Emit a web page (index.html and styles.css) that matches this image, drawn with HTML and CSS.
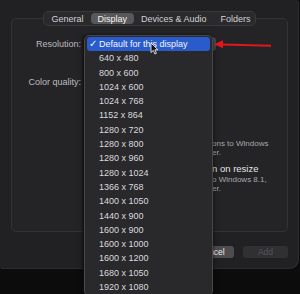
FILE: index.html
```html
<!DOCTYPE html>
<html lang="en">
<head>
  <meta charset="UTF-8" />
  <title>Edit PC - Display</title>
  <meta name="viewport" content="width=device-width, initial-scale=1.0" />
  <link rel="stylesheet" href="styles.css">
</head>
<body>
  <div class="window">
    <div class="tabs">
      <span class="tab">General</span>
      <span class="tab active">Display</span>
      <span class="tab">Devices &amp; Audio</span>
      <span class="tab">Folders</span>
    </div>

    <div class="group">
      <div class="row">
        <label class="label">Resolution:</label>
        <div class="popup"></div>
      </div>
      <div class="row row-gap">
        <label class="label">Color quality:</label>
        <div class="popup short"></div>
      </div>

      <div class="notes">
        <p class="note">ons to Windows</p>
        <p class="note">er.</p>
        <p class="option">n on resize</p>
        <p class="note">o Windows 8.1,</p>
        <p class="note">er.</p>
      </div>
    </div>

    <div class="buttons">
      <button class="btn">Cancel</button>
      <button class="btn disabled">Add</button>
    </div>

    <!-- open resolution menu -->
    <ul class="menu">
      <li class="item selected"><span class="check">✓</span>Default for this display</li>
      <li class="item">640 x 480</li>
      <li class="item">800 x 600</li>
      <li class="item">1024 x 600</li>
      <li class="item">1024 x 768</li>
      <li class="item">1152 x 864</li>
      <li class="item">1280 x 720</li>
      <li class="item">1280 x 800</li>
      <li class="item">1280 x 960</li>
      <li class="item">1280 x 1024</li>
      <li class="item">1366 x 768</li>
      <li class="item">1400 x 1050</li>
      <li class="item">1440 x 900</li>
      <li class="item">1600 x 900</li>
      <li class="item">1600 x 1000</li>
      <li class="item">1600 x 1200</li>
      <li class="item">1680 x 1050</li>
      <li class="item">1920 x 1080</li>
    </ul>

    <svg class="cursor" width="9" height="13" viewBox="0 0 9 13">
      <path d="M1 1 L1 10.5 L3.3 8.4 L4.9 12 L6.4 11.3 L4.9 7.8 L8 7.8 Z" fill="#111" stroke="#eee" stroke-width="0.9" stroke-linejoin="round" />
    </svg>

    <svg class="arrow" width="60" height="10" viewBox="0 0 60 10">
      <polygon points="0,4.3 9,0.3 9,8.3" fill="#e3161c" />
      <line x1="8" y1="4.4" x2="57" y2="5.8" stroke="#e3161c" stroke-width="2" />
    </svg>
  </div>
</body>
</html>
```

FILE: styles.css
```css
* {
  box-sizing: border-box;
  margin: 0;
  padding: 0;
}

body {
  background-color: #0c0c0d;
  font-family: 'Liberation Sans', Arial, sans-serif;
  font-size: 9px;
  color: #c4c3c6;
  width: 300px;
  height: 294px;
  overflow: hidden;
}

.window {
  position: relative;
  width: 298px;
  height: 268px;
  padding-top: 11px;
  background-color: #212023;
  border-radius: 0 0 9px 0;
  box-shadow: 1px 1px 0 #2c2b2e;
}

.tabs {
  position: relative;
  z-index: 1;
  display: flex;
  width: 213px;
  height: 15px;
  margin: 0 auto;
  padding: 1px;
  background-color: #2a292c;
  border: 1px solid #39383b;
  border-radius: 5px;
}

.tab {
  flex: 1 1 auto;
  display: flex;
  align-items: center;
  justify-content: center;
  padding: 0 7px;
  border-radius: 4px;
  color: #d2d1d4;
  white-space: nowrap;
}

.tab.active {
  background-color: #58575a;
  color: #f2f2f2;
}

.group {
  width: 277px;
  height: 214px;
  margin: -8px 0 0 11px;
  padding-top: 17px;
  background-color: #242326;
  border: 1px solid #333235;
  border-radius: 5px;
}

.row {
  display: flex;
  align-items: center;
  height: 16px;
}

.row-gap {
  margin-top: 22px;
}

.label {
  width: 70px;
  padding-right: 1px;
  text-align: right;
  color: #bdbcbf;
}

.popup {
  width: 132px;
  height: 14px;
  margin-left: 2px;
  background-color: #4a494c;
  border-radius: 4px;
}

.popup.short {
  width: 100px;
}

.notes {
  margin: 49px 0 0 200px;
  white-space: nowrap;
}

.note {
  font-size: 8px;
  line-height: 9px;
  color: #a9a8ab;
}

.option {
  margin: 6px 0 1px;
  font-size: 9.5px;
  line-height: 11px;
  color: #e6e5e8;
}

.buttons {
  display: flex;
  justify-content: flex-end;
  gap: 9px;
  margin-top: 14px;
  padding-right: 10px;
}

.btn {
  width: 45px;
  height: 12px;
  border: none;
  border-radius: 3px;
  background-color: #4d4c4f;
  color: #ececec;
  font-family: inherit;
  font-size: 8.5px;
}

.btn.disabled {
  background-color: #302f32;
  color: #58575a;
}

.menu {
  position: absolute;
  left: 84px;
  top: 35px;
  width: 129px;
  padding: 1px;
  list-style: none;
  background-color: #29282b;
  border: 1px solid #48474a;
  border-radius: 5px;
  box-shadow: -1px 0 2px #0e0e10, 0 2px 6px rgba(0, 0, 0, 0.5);
}

.item {
  position: relative;
  height: 14.3px;
  line-height: 14.3px;
  margin: 0 1px;
  padding-left: 12px;
  color: #dcdbde;
  border-radius: 3px;
  white-space: nowrap;
}

.item.selected {
  background-color: #2a5bcb;
  color: #f4f6ff;
}

.check {
  position: absolute;
  left: 2px;
  font-size: 9.5px;
}

.cursor {
  position: absolute;
  left: 150px;
  top: 42px;
}

.arrow {
  position: absolute;
  left: 214px;
  top: 40px;
}
```
